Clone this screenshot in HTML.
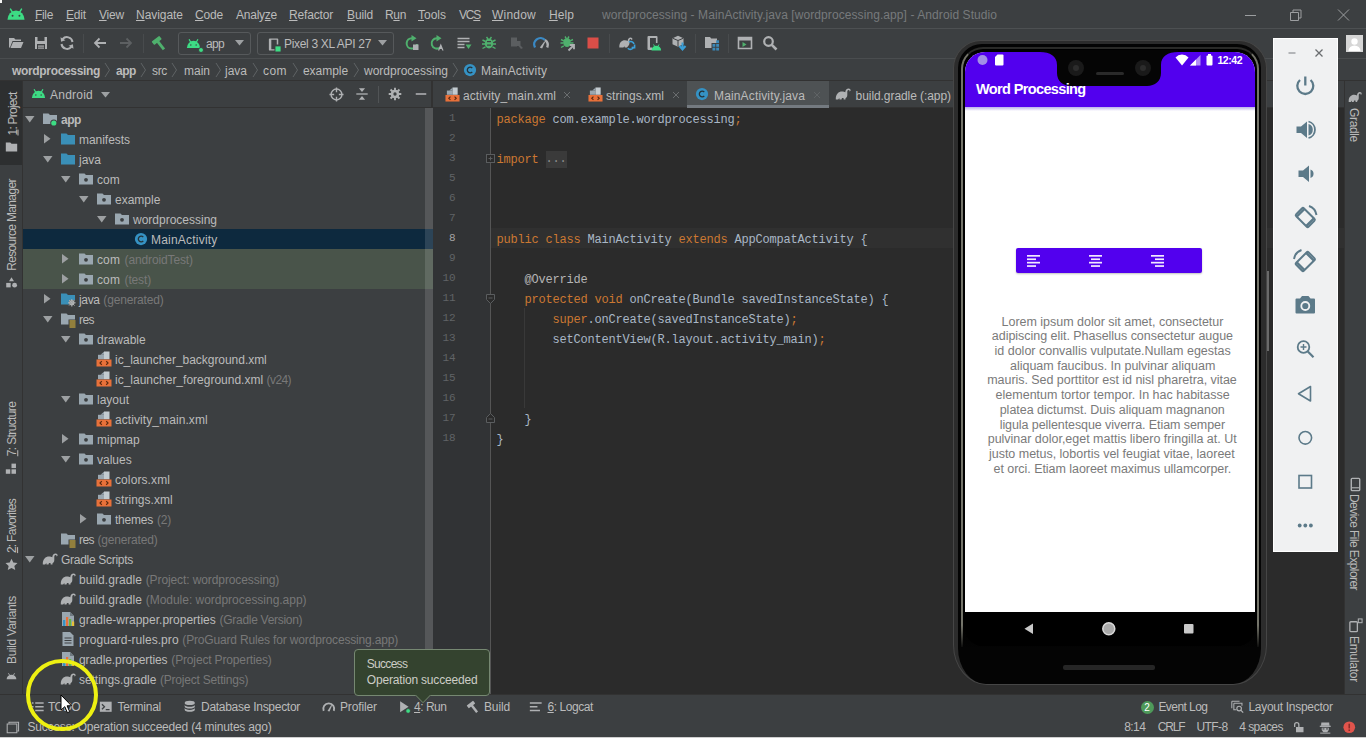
<!DOCTYPE html>
<html>
<head>
<meta charset="utf-8">
<title>Android Studio</title>
<style>
*{box-sizing:border-box;margin:0;padding:0}
html,body{width:1366px;height:738px;overflow:hidden;background:#3c3f41}
body{font-family:"Liberation Sans",sans-serif;font-size:12px;color:#bbbbbb;position:relative}
.abs{position:absolute}
.ic{position:absolute;overflow:visible}
.t{position:absolute;white-space:pre}
u{text-decoration:underline;text-underline-offset:1px}
.ln{position:absolute;width:21.500px;text-align:right;font-family:"Liberation Mono",monospace;font-size:11px;letter-spacing:-0.1px;line-height:20px;height:20px}
.code{position:absolute;white-space:pre;font-family:"Liberation Mono",monospace;font-size:12px;letter-spacing:-0.2px;line-height:20px;height:20px;color:#a9b7c6}
.k{color:#cc7832}
.g{color:#787878}
</style>
</head>
<body>

<div class="abs" style="left:0px;top:0px;width:1366px;height:738px;background:#3c3f41;"></div>
<div class="abs" style="left:0px;top:28px;width:1366px;height:1px;background:#4d5052;"></div>
<div class="abs" style="left:0px;top:0px;width:2px;height:3px;background:#f4f4f4;"></div>
<div class="abs" style="left:0px;top:58px;width:1366px;height:1px;background:#4a4d4f;"></div>
<div class="abs" style="left:0px;top:80px;width:1366px;height:1px;background:#323232;"></div>
<svg class="ic" style="left:5.0px;top:3.0px;" width="22" height="22" viewBox="0 0 16 16"><path d="M1.800 12.200a6.200 6.700 0 0 1 12.400 0z" fill="#3ddc84"/><path d="M4 4.400l1.600 2.600M12 4.400l-1.600 2.600" stroke="#3ddc84" stroke-width="1.100" stroke-linecap="round"/><circle cx="5.500" cy="9.300" r=".7" fill="#3c3f41"/><circle cx="10.500" cy="9.300" r=".7" fill="#3c3f41"/></svg>
<span class="t" style="left:35.0px;top:7.0px;line-height:16px;height:16px;letter-spacing:-0.34px"><u>F</u>ile</span>
<span class="t" style="left:66.0px;top:7.0px;line-height:16px;height:16px;letter-spacing:-0.17px"><u>E</u>dit</span>
<span class="t" style="left:99.0px;top:7.0px;line-height:16px;height:16px;letter-spacing:-0.20px"><u>V</u>iew</span>
<span class="t" style="left:136.0px;top:7.0px;line-height:16px;height:16px;letter-spacing:-0.05px"><u>N</u>avigate</span>
<span class="t" style="left:195.0px;top:7.0px;line-height:16px;height:16px;letter-spacing:-0.17px"><u>C</u>ode</span>
<span class="t" style="left:236.0px;top:7.0px;line-height:16px;height:16px;letter-spacing:-0.24px">Analy<u>z</u>e</span>
<span class="t" style="left:289.0px;top:7.0px;line-height:16px;height:16px;letter-spacing:-0.17px"><u>R</u>efactor</span>
<span class="t" style="left:347.0px;top:7.0px;line-height:16px;height:16px;letter-spacing:-0.14px"><u>B</u>uild</span>
<span class="t" style="left:385.0px;top:7.0px;line-height:16px;height:16px;letter-spacing:-0.34px">R<u>u</u>n</span>
<span class="t" style="left:418.0px;top:7.0px;line-height:16px;height:16px"><u>T</u>ools</span>
<span class="t" style="left:459.0px;top:7.0px;line-height:16px;height:16px;letter-spacing:-1.20px">VC<u>S</u></span>
<span class="t" style="left:492.0px;top:7.0px;line-height:16px;height:16px;letter-spacing:0.22px"><u>W</u>indow</span>
<span class="t" style="left:549.0px;top:7.0px;line-height:16px;height:16px;letter-spacing:0.08px"><u>H</u>elp</span>
<span class="t" style="left:602.0px;top:7.0px;line-height:16px;height:16px;color:#777a7c;letter-spacing:0.08px">wordprocessing - MainActivity.java [wordprocessing.app] - Android Studio</span>
<svg class="ic" style="left:1240px;top:5px" width="120" height="20"><path d="M5 10.500h11" stroke="#9c9ea0" stroke-width="1"/><path d="M50.500 7.500h8v8h-8zM53 7.500V5h8v8h-2.500" fill="none" stroke="#9c9ea0" stroke-width="1"/><path d="M98 4.500l11 11M109 4.500l-11 11" stroke="#9c9ea0" stroke-width="1"/></svg>
<svg class="ic" style="left:7.5px;top:34.7px;" width="16" height="16" viewBox="0 0 16 16"><path d="M1 3h5l1.5 1.5H13V6H4.5L2 12.5H1z" fill="#afb1b3"/><path d="M5 7h10.5l-2.5 6H2.5z" fill="#afb1b3"/></svg>
<svg class="ic" style="left:33.0px;top:34.7px;" width="16" height="16" viewBox="0 0 16 16"><path d="M2 2h12v12H2z" fill="#afb1b3"/><rect x="4.5" y="2" width="7" height="4" fill="#3c3f41"/><rect x="4" y="9" width="8" height="5" fill="#3c3f41"/><rect x="5" y="10.5" width="6" height="1.2" fill="#afb1b3"/><rect x="5" y="12.5" width="6" height="1.2" fill="#afb1b3"/></svg>
<svg class="ic" style="left:59.0px;top:34.7px;" width="16" height="16" viewBox="0 0 16 16"><path d="M13.5 7A5.6 5.6 0 0 0 3.6 4.2" fill="none" stroke="#afb1b3" stroke-width="2"/><path d="M1.5 2.2l.6 4.6 4.3-1.6z" fill="#afb1b3"/><path d="M2.5 9A5.6 5.6 0 0 0 12.4 11.8" fill="none" stroke="#afb1b3" stroke-width="2"/><path d="M14.5 13.8l-.6-4.6-4.3 1.6z" fill="#afb1b3"/></svg>
<svg class="ic" style="left:92.0px;top:34.7px;" width="16" height="16" viewBox="0 0 16 16"><path d="M14 8H3.5M7.5 3.5L3 8l4.5 4.5" fill="none" stroke="#afb1b3" stroke-width="1.8"/></svg>
<svg class="ic" style="left:118.0px;top:34.7px;" width="16" height="16" viewBox="0 0 16 16"><path d="M2 8h10.5M8.5 3.5L13 8l-4.5 4.5" fill="none" stroke="#5d6062" stroke-width="1.8"/></svg>
<svg class="ic" style="left:152.0px;top:34.7px;" width="16" height="16" viewBox="0 0 16 16"><g transform="rotate(-38 8 8)"><rect x="2.200" y="1.800" width="9.600" height="4.200" rx=".6" fill="#4fb06d"/><rect x="5.700" y="5" width="2.900" height="10.500" fill="#4fb06d"/></g></svg>
<div class="abs" style="left:83px;top:34px;width:1px;height:19px;background:#484b4d;"></div>
<div class="abs" style="left:143px;top:34px;width:1px;height:19px;background:#484b4d;"></div>
<div class="abs" style="left:178px;top:32px;width:73px;height:23px;border:1px solid #56595b;border-radius:3px"></div>
<svg class="ic" style="left:185.0px;top:34.5px;" width="17" height="17" viewBox="0 0 16 16"><path d="M1.800 12.200a6.200 6.700 0 0 1 12.400 0z" fill="#3ddc84"/><path d="M4 4.400l1.600 2.600M12 4.400l-1.600 2.600" stroke="#3ddc84" stroke-width="1.100" stroke-linecap="round"/><circle cx="5.500" cy="9.300" r=".7" fill="#3c3f41"/><circle cx="10.500" cy="9.300" r=".7" fill="#3c3f41"/></svg>
<div class="abs" style="left:198px;top:47px;width:6px;height:6px;border-radius:3px;background:#3ddc84;border:1px solid #3c3f41"></div>
<span class="t" style="left:206.0px;top:36.0px;line-height:16px;height:16px;letter-spacing:-0.68px">app</span>
<svg class="ic" style="left:235px;top:40px" width="10" height="6"><path d="M0 0h9L4.500 5.500z" fill="#9da0a2"/></svg>
<div class="abs" style="left:257px;top:32px;width:137px;height:23px;border:1px solid #56595b;border-radius:3px"></div>
<svg class="ic" style="left:267.0px;top:36.5px;" width="15" height="15" viewBox="0 0 16 16"><path d="M3 1.5h8a1 1 0 0 1 1 1V8h-1.6V3H4.6v10H8v1.5H3a1 1 0 0 1-1-1v-11a1 1 0 0 1 1-1z" fill="#afb1b3"/><rect x="9" y="10" width="5.5" height="5.5" fill="#3ddc84"/></svg>
<span class="t" style="left:284.0px;top:36.0px;line-height:16px;height:16px;letter-spacing:-0.31px">Pixel 3 XL API 27</span>
<svg class="ic" style="left:378px;top:40px" width="10" height="6"><path d="M0 0h9L4.500 5.500z" fill="#9da0a2"/></svg>
<svg class="ic" style="left:403.5px;top:34.7px;" width="16" height="16" viewBox="0 0 16 16"><path d="M8 3.2A5.2 5.2 0 1 0 13 9" fill="none" stroke="#4fb06d" stroke-width="2"/><path d="M7.5 0l5 3.2-5 3.2z" fill="#4fb06d"/><rect x="9" y="9.5" width="5.5" height="5.5" fill="#afb1b3"/></svg>
<svg class="ic" style="left:429.0px;top:34.7px;" width="16" height="16" viewBox="0 0 16 16"><path d="M8 3.2A5.2 5.2 0 1 0 11 12.5" fill="none" stroke="#4fb06d" stroke-width="2"/><path d="M7.5 0l5 3.2-5 3.2z" fill="#4fb06d"/><path d="M9 15.5l2.8-7 2.8 7h-1.4l-.5-1.5h-1.9l-.5 1.5z" fill="#afb1b3"/></svg>
<svg class="ic" style="left:456.0px;top:34.7px;" width="16" height="16" viewBox="0 0 16 16"><path d="M1.5 3.5h12M1.5 6.5h12M1.5 9.5h7M1.5 12.5h7" stroke="#afb1b3" stroke-width="1.7"/><path d="M9.5 9.5h6l-3 4.5z" fill="#4fb06d"/></svg>
<svg class="ic" style="left:481.0px;top:34.7px;" width="16" height="16" viewBox="0 0 16 16"><ellipse cx="8" cy="8.5" rx="4.2" ry="5" fill="#4fb06d"/><path d="M1.5 5l3 1.5M14.5 5l-3 1.5M1 9h3M15 9h-3M1.5 13.5l3-1.7M14.5 13.5l-3-1.7M5.5 2l1.5 2M10.5 2L9 4" stroke="#4fb06d" stroke-width="1.4"/><rect x="6" y="6" width="4" height="1.2" fill="#3c3f41"/><rect x="6" y="9.5" width="4" height="1.2" fill="#3c3f41"/></svg>
<svg class="ic" style="left:507.5px;top:34.7px;" width="16" height="16" viewBox="0 0 16 16"><path d="M3 2.5h6v9H3zM9 6h3.5v4.5L15 13l-2 1-2.5-3H9z" fill="#5b5e60"/></svg>
<svg class="ic" style="left:533.0px;top:34.7px;" width="16" height="16" viewBox="0 0 16 16"><path d="M2 12.5A6.3 6.3 0 0 1 12 5" fill="none" stroke="#3a89c4" stroke-width="2.4"/><path d="M12 5a6.3 6.3 0 0 1 2.2 7.5" fill="none" stroke="#afb1b3" stroke-width="2.4"/><path d="M6.8 12.5l4.5-6 .8.5-3 6.5z" fill="#afb1b3"/></svg>
<svg class="ic" style="left:560.0px;top:34.7px;" width="16" height="16" viewBox="0 0 16 16"><ellipse cx="7" cy="7.5" rx="3.8" ry="4.6" fill="#4fb06d"/><path d="M1 4.5l2.8 1.3M13 4.5l-2.8 1.3M.5 8h3M13.5 8h-3M1 12.5l2.8-1.6M5 1.5l1.2 1.8M9 1.5L7.8 3.3" stroke="#4fb06d" stroke-width="1.4"/><path d="M8.5 15.5l4.5-4.5M9.8 10h4.2v4.2" fill="none" stroke="#afb1b3" stroke-width="1.8"/></svg>
<svg class="ic" style="left:585.0px;top:34.7px;" width="16" height="16" viewBox="0 0 16 16"><rect x="2.5" y="2.5" width="11" height="11" fill="#db4e48"/></svg>
<svg class="ic" style="left:619.0px;top:34.7px;" width="16" height="16" viewBox="0 0 16 16"><path d="M.3 11.600C.3 7.500 2.700 5.200 5.800 5.200c1.300 0 2.200.300 2.900.700C8.700 3.900 10 2.500 11.600 2.500c1.200 0 1.800.800 1.800 1.600 0 .600-.400 1.100-1 1.100.100-.700-.300-1.200-.800-1.200-.800 0-1.200.800-1.200 1.900v2.500c0 .800-.300 1.500-.800 2L8 12.500H5.800l-.400-1.300-1 1.300H.3z" fill="#afb1b3"/><path d="M8.800 13.200a3.300 3.300 0 0 0 5.700-1.400M15.600 9.600v3h-3" fill="none" stroke="#3a9fd8" stroke-width="1.600"/><path d="M15 9a3.300 3.300 0 0 0-5.200-1.800" fill="none" stroke="#3a9fd8" stroke-width="1.600"/></svg>
<svg class="ic" style="left:645.5px;top:34.7px;" width="16" height="16" viewBox="0 0 16 16"><path d="M2.500 1h8a1 1 0 0 1 1 1v6h-1.600V3H4v9.500h2V15H2.500a1 1 0 0 1-1-1V2a1 1 0 0 1 1-1z" fill="#afb1b3"/><path d="M5.500 15.500a4.800 4.800 0 0 1 9.600 0z" fill="#3ddc84"/><path d="M7.500 9.500l1 1.600M13 9.500l-1 1.600" stroke="#3ddc84" stroke-width="1"/></svg>
<svg class="ic" style="left:670.5px;top:34.7px;" width="16" height="16" viewBox="0 0 16 16"><path d="M7 .8l5.500 2.400v6L7 11.800 1.500 9.200v-6z" fill="#afb1b3"/><path d="M7 5.500v6M1.800 3.300L7 5.500l5.200-2.200" fill="none" stroke="#3c3f41" stroke-width="1"/><path d="M11.500 7.500v6M8.500 11l3 3.500 3-3.500" fill="none" stroke="#3a9fd8" stroke-width="2"/></svg>
<svg class="ic" style="left:704.0px;top:34.7px;" width="16" height="16" viewBox="0 0 16 16"><path d="M1 2h5l1.200 1.500H13V8H7.500v5H1z" fill="#afb1b3"/><rect x="8.500" y="9" width="2.800" height="2.800" fill="#3a89b9"/><rect x="12.200" y="9" width="2.800" height="2.800" fill="#3a89b9"/><rect x="8.500" y="12.700" width="2.800" height="2.800" fill="#3a89b9"/><rect x="12.200" y="12.700" width="2.800" height="2.800" fill="#3a89b9"/><rect x="12.200" y="5.300" width="2.800" height="2.800" fill="#3a89b9"/></svg>
<svg class="ic" style="left:736.5px;top:34.7px;" width="16" height="16" viewBox="0 0 16 16"><path d="M1.500 2.500h13v11h-13z" fill="none" stroke="#afb1b3" stroke-width="1.600"/><rect x="1.500" y="2.500" width="13" height="3" fill="#afb1b3"/><path d="M5.500 7l4 2.500-4 2.500z" fill="#4fb06d"/></svg>
<svg class="ic" style="left:762.0px;top:34.7px;" width="16" height="16" viewBox="0 0 16 16"><circle cx="6.500" cy="6.500" r="4.300" fill="none" stroke="#afb1b3" stroke-width="2.200"/><path d="M9.800 9.800l4.700 4.700" stroke="#afb1b3" stroke-width="2.600"/></svg>
<div class="abs" style="left:609px;top:34px;width:1px;height:19px;background:#484b4d;"></div>
<div class="abs" style="left:695px;top:34px;width:1px;height:19px;background:#484b4d;"></div>
<div class="abs" style="left:728px;top:34px;width:1px;height:19px;background:#484b4d;"></div>
<svg class="ic" style="left:1346px;top:35px" width="17" height="17"><rect width="17" height="17" fill="#d6d6d6"/><circle cx="8.500" cy="6.500" r="3.200" fill="#fff"/><path d="M2.500 16a6 5.500 0 0 1 12 0z" fill="#fff"/></svg>
<span class="t" style="left:12.0px;top:62.5px;line-height:16px;height:16px;font-weight:bold;letter-spacing:-0.33px">wordprocessing</span>
<span class="t" style="left:116.0px;top:62.5px;line-height:16px;height:16px;font-weight:bold;letter-spacing:-0.45px">app</span>
<span class="t" style="left:152.0px;top:62.5px;line-height:16px;height:16px;letter-spacing:-0.33px">src</span>
<span class="t" style="left:184.0px;top:62.5px;line-height:16px;height:16px">main</span>
<span class="t" style="left:225.0px;top:62.5px;line-height:16px;height:16px">java</span>
<span class="t" style="left:263.0px;top:62.5px;line-height:16px;height:16px;letter-spacing:0.44px">com</span>
<span class="t" style="left:303.0px;top:62.5px;line-height:16px;height:16px;letter-spacing:-0.05px">example</span>
<span class="t" style="left:364.0px;top:62.5px;line-height:16px;height:16px">wordprocessing</span>
<svg class="ic" style="left:104px;top:62px" width="7" height="16"><path d="M1 1l4.500 7L1 15" fill="none" stroke="#5f6365" stroke-width="1"/></svg>
<svg class="ic" style="left:140px;top:62px" width="7" height="16"><path d="M1 1l4.500 7L1 15" fill="none" stroke="#5f6365" stroke-width="1"/></svg>
<svg class="ic" style="left:171px;top:62px" width="7" height="16"><path d="M1 1l4.500 7L1 15" fill="none" stroke="#5f6365" stroke-width="1"/></svg>
<svg class="ic" style="left:215px;top:62px" width="7" height="16"><path d="M1 1l4.500 7L1 15" fill="none" stroke="#5f6365" stroke-width="1"/></svg>
<svg class="ic" style="left:252px;top:62px" width="7" height="16"><path d="M1 1l4.500 7L1 15" fill="none" stroke="#5f6365" stroke-width="1"/></svg>
<svg class="ic" style="left:292px;top:62px" width="7" height="16"><path d="M1 1l4.500 7L1 15" fill="none" stroke="#5f6365" stroke-width="1"/></svg>
<svg class="ic" style="left:353px;top:62px" width="7" height="16"><path d="M1 1l4.500 7L1 15" fill="none" stroke="#5f6365" stroke-width="1"/></svg>
<svg class="ic" style="left:452px;top:62px" width="7" height="16"><path d="M1 1l4.500 7L1 15" fill="none" stroke="#5f6365" stroke-width="1"/></svg>
<svg class="ic" style="left:462.5px;top:62.5px;" width="14" height="14" viewBox="0 0 16 16"><circle cx="8" cy="8" r="7" fill="#3592c4"/><path d="M10.600 10.300A3.300 3.300 0 1 1 10.600 5.700" fill="none" stroke="#263238" stroke-width="1.500"/></svg>
<span class="t" style="left:481.0px;top:62.5px;line-height:16px;height:16px;letter-spacing:0.17px">MainActivity</span>
<div class="abs" style="left:0px;top:81px;width:22px;height:614px;background:#3c3f41;"></div>
<div class="abs" style="left:22px;top:81px;width:1px;height:614px;background:#323232;"></div>
<div class="abs" style="left:0px;top:81px;width:22px;height:84px;background:#2d2f30;"></div>
<span class="t" style="left:-9.5px;top:106.5px;width:43.0px;letter-spacing:-0.77px;transform:rotate(-90deg);transform-origin:50% 50%"><u>1</u>: Project</span>
<svg class="ic" style="left:5.0px;top:140.0px;" width="13" height="13" viewBox="0 0 16 16"><path d="M1 3h5.500L8 4.500h7V14H1z" fill="#afb1b3"/></svg>
<span class="t" style="left:-33.8px;top:217.8px;width:91.5px;letter-spacing:-0.66px;transform:rotate(-90deg);transform-origin:50% 50%">Resource Manager</span>
<svg class="ic" style="left:5.0px;top:275.5px;" width="13" height="13" viewBox="0 0 16 16"><path d="M8 1.500l3 5H5z" fill="#afb1b3"/><rect x="1.500" y="8.500" width="5.500" height="5.500" fill="#afb1b3"/><circle cx="11.800" cy="11.300" r="3" fill="#afb1b3"/></svg>
<span class="t" style="left:-15.2px;top:421.8px;width:54.5px;letter-spacing:-0.63px;transform:rotate(-90deg);transform-origin:50% 50%"><u>7</u>: Structure</span>
<svg class="ic" style="left:5.0px;top:461.5px;" width="13" height="13" viewBox="0 0 16 16"><rect x="1" y="9" width="5.500" height="5.500" fill="#afb1b3"/><rect x="8" y="9" width="5.500" height="5.500" fill="#afb1b3"/><rect x="8" y="2" width="5.500" height="5.500" fill="#afb1b3"/></svg>
<span class="t" style="left:-15.1px;top:518.6px;width:54.2px;letter-spacing:-0.71px;transform:rotate(-90deg);transform-origin:50% 50%"><u>2</u>: Favorites</span>
<svg class="ic" style="left:5.0px;top:558.0px;" width="13" height="13" viewBox="0 0 16 16"><path d="M8 .8l2.200 4.800 5.200.6-3.900 3.500 1.100 5.100L8 12.200l-4.600 2.600 1.100-5.100L.6 6.200l5.200-.6z" fill="#afb1b3"/></svg>
<span class="t" style="left:-21.9px;top:622.6px;width:67.8px;letter-spacing:-0.38px;transform:rotate(-90deg);transform-origin:50% 50%">Build Variants</span>
<svg class="ic" style="left:5.0px;top:668.5px;" width="13" height="13" viewBox="0 0 16 16"><path d="M2 12.500a6 5.500 0 0 1 12 0z" fill="#afb1b3"/><path d="M4.200 5.200l1.400 2.300M11.800 5.200l-1.400 2.300" stroke="#afb1b3" stroke-width="1.100"/></svg>
<div class="abs" style="left:23px;top:107px;width:410px;height:1px;background:#323232;"></div>
<svg class="ic" style="left:29.8px;top:85.0px;" width="17" height="17" viewBox="0 0 16 16"><path d="M1.800 12.200a6.200 6.700 0 0 1 12.400 0z" fill="#3ddc84"/><path d="M4 4.400l1.600 2.600M12 4.400l-1.600 2.600" stroke="#3ddc84" stroke-width="1.100" stroke-linecap="round"/><circle cx="5.500" cy="9.300" r=".7" fill="#3c3f41"/><circle cx="10.500" cy="9.300" r=".7" fill="#3c3f41"/></svg>
<span class="t" style="left:50.0px;top:87.0px;line-height:16px;height:16px;letter-spacing:0.23px">Android</span>
<svg class="ic" style="left:101px;top:92px" width="10" height="6"><path d="M0 0h9L4.500 5.500z" fill="#9da0a2"/></svg>
<svg class="ic" style="left:328.5px;top:86.5px;" width="15" height="15" viewBox="0 0 16 16"><circle cx="8" cy="8" r="5.800" fill="none" stroke="#afb1b3" stroke-width="1.500"/><path d="M8 .5v5M8 10.500v5M.5 8h5M10.500 8h5" stroke="#afb1b3" stroke-width="1.500"/></svg>
<svg class="ic" style="left:355.0px;top:87.0px;" width="14" height="14" viewBox="0 0 16 16"><path d="M1.500 8h13" stroke="#afb1b3" stroke-width="1.500"/><path d="M4.500 1.500h7L8 5.800zM4.500 14.500h7L8 10.200z" fill="#afb1b3"/></svg>
<div class="abs" style="left:378px;top:86px;width:1px;height:17px;background:#515456;"></div>
<svg class="ic" style="left:388.0px;top:87.0px;" width="14" height="14" viewBox="0 0 16 16"><circle cx="8" cy="8" r="3.600" fill="none" stroke="#afb1b3" stroke-width="2.600"/><path d="M8 .8v14.400M.8 8h14.400M2.900 2.900l10.200 10.200M13.100 2.900L2.900 13.100" stroke="#afb1b3" stroke-width="2.200"/><circle cx="8" cy="8" r="1.900" fill="#3c3f41"/></svg>
<svg class="ic" style="left:414.0px;top:87.0px;" width="14" height="14" viewBox="0 0 16 16"><path d="M2 8h12" stroke="#afb1b3" stroke-width="1.800"/></svg>
<svg class="ic" style="left:25px;top:116px" width="10" height="7"><path d="M0 0h9.500L4.750 6.500z" fill="#9da0a2"/></svg>
<svg class="ic" style="left:41.8px;top:110.5px;" width="16" height="16" viewBox="0 0 16 16"><path d="M1 2.500h5.500L8 4h7v9H1z" fill="#9aa7b0"/><circle cx="11.800" cy="12" r="3.600" fill="#3c3f41"/><circle cx="11.800" cy="12" r="2.600" fill="#3ddc84"/></svg>
<span class="t" style="left:61.0px;top:112.0px;line-height:16px;height:16px;font-weight:bold;letter-spacing:-0.45px">app</span>
<svg class="ic" style="left:43.5px;top:134px" width="7" height="10"><path d="M0 0v9.500L6.500 4.750z" fill="#9da0a2"/></svg>
<svg class="ic" style="left:59.8px;top:130.5px;" width="16" height="16" viewBox="0 0 16 16"><path d="M1 2.500h5.500L8 4h7v9.500H1z" fill="#3a8fb7"/></svg>
<span class="t" style="left:79.0px;top:132.0px;line-height:16px;height:16px;letter-spacing:-0.04px">manifests</span>
<svg class="ic" style="left:43px;top:156px" width="10" height="7"><path d="M0 0h9.500L4.750 6.500z" fill="#9da0a2"/></svg>
<svg class="ic" style="left:59.8px;top:150.5px;" width="16" height="16" viewBox="0 0 16 16"><path d="M1 2.500h5.500L8 4h7v9.500H1z" fill="#3a8fb7"/></svg>
<span class="t" style="left:79.0px;top:152.0px;line-height:16px;height:16px">java</span>
<svg class="ic" style="left:61px;top:176px" width="10" height="7"><path d="M0 0h9.500L4.750 6.500z" fill="#9da0a2"/></svg>
<svg class="ic" style="left:77.8px;top:170.5px;" width="16" height="16" viewBox="0 0 16 16"><path d="M1 2.500h5.500L8 4h7v9.500H1z" fill="#9aa7b0"/><circle cx="8" cy="8.800" r="1.900" fill="#3c3f41"/></svg>
<span class="t" style="left:97.0px;top:172.0px;line-height:16px;height:16px">com</span>
<svg class="ic" style="left:79px;top:196px" width="10" height="7"><path d="M0 0h9.500L4.750 6.500z" fill="#9da0a2"/></svg>
<svg class="ic" style="left:95.8px;top:190.5px;" width="16" height="16" viewBox="0 0 16 16"><path d="M1 2.500h5.500L8 4h7v9.500H1z" fill="#9aa7b0"/><circle cx="8" cy="8.800" r="1.900" fill="#3c3f41"/></svg>
<span class="t" style="left:115.0px;top:192.0px;line-height:16px;height:16px">example</span>
<svg class="ic" style="left:97px;top:216px" width="10" height="7"><path d="M0 0h9.500L4.750 6.500z" fill="#9da0a2"/></svg>
<svg class="ic" style="left:113.8px;top:210.5px;" width="16" height="16" viewBox="0 0 16 16"><path d="M1 2.500h5.500L8 4h7v9.500H1z" fill="#9aa7b0"/><circle cx="8" cy="8.800" r="1.900" fill="#3c3f41"/></svg>
<span class="t" style="left:133.0px;top:212.0px;line-height:16px;height:16px">wordprocessing</span>
<div class="abs" style="left:23px;top:229px;width:410px;height:20px;background:#0d293e;"></div>
<svg class="ic" style="left:133.5px;top:231.5px;" width="14" height="14" viewBox="0 0 16 16"><circle cx="8" cy="8" r="7" fill="#3592c4"/><path d="M10.600 10.300A3.300 3.300 0 1 1 10.600 5.700" fill="none" stroke="#263238" stroke-width="1.500"/></svg>
<span class="t" style="left:151.0px;top:232.0px;line-height:16px;height:16px;letter-spacing:0.21px">MainActivity</span>
<div class="abs" style="left:23px;top:249px;width:410px;height:20px;background:#49544a;"></div>
<svg class="ic" style="left:61.5px;top:254px" width="7" height="10"><path d="M0 0v9.500L6.500 4.750z" fill="#9da0a2"/></svg>
<svg class="ic" style="left:77.8px;top:250.5px;" width="16" height="16" viewBox="0 0 16 16"><path d="M1 2.500h5.500L8 4h7v9.500H1z" fill="#9aa7b0"/><circle cx="8" cy="8.800" r="1.900" fill="#3c3f41"/></svg>
<span class="t" style="left:97.0px;top:252.0px;line-height:16px;height:16px;letter-spacing:0.11px">com</span>
<span class="t" style="left:124.6px;top:252.0px;line-height:16px;height:16px;color:#787878;letter-spacing:-0.13px">(androidTest)</span>
<div class="abs" style="left:23px;top:269px;width:410px;height:20px;background:#49544a;"></div>
<svg class="ic" style="left:61.5px;top:274px" width="7" height="10"><path d="M0 0v9.500L6.500 4.750z" fill="#9da0a2"/></svg>
<svg class="ic" style="left:77.8px;top:270.5px;" width="16" height="16" viewBox="0 0 16 16"><path d="M1 2.500h5.500L8 4h7v9.500H1z" fill="#9aa7b0"/><circle cx="8" cy="8.800" r="1.900" fill="#3c3f41"/></svg>
<span class="t" style="left:97.0px;top:272.0px;line-height:16px;height:16px;letter-spacing:0.11px">com</span>
<span class="t" style="left:124.6px;top:272.0px;line-height:16px;height:16px;color:#787878;letter-spacing:-0.16px">(test)</span>
<svg class="ic" style="left:43.5px;top:294px" width="7" height="10"><path d="M0 0v9.500L6.500 4.750z" fill="#9da0a2"/></svg>
<svg class="ic" style="left:59.8px;top:290.5px;" width="16" height="16" viewBox="0 0 16 16"><path d="M1 2.500h5.500L8 4h7v5H9v4.500H1z" fill="#3a8fb7"/><circle cx="11.800" cy="11.800" r="2" fill="none" stroke="#afb1b3" stroke-width="1.400"/><path d="M11.800 8v7.600M8 11.800h7.600M9.100 9.100l5.400 5.400M14.500 9.100l-5.400 5.400" stroke="#afb1b3" stroke-width="1"/></svg>
<span class="t" style="left:79.0px;top:292.0px;line-height:16px;height:16px;letter-spacing:-0.35px">java</span>
<span class="t" style="left:103.3px;top:292.0px;line-height:16px;height:16px;color:#787878;letter-spacing:-0.16px">(generated)</span>
<svg class="ic" style="left:43px;top:316px" width="10" height="7"><path d="M0 0h9.500L4.750 6.500z" fill="#9da0a2"/></svg>
<svg class="ic" style="left:59.8px;top:310.5px;" width="16" height="16" viewBox="0 0 16 16"><path d="M1 2.500h5.500L8 4h7v4.500H8.500v5H1z" fill="#9aa7b0"/><path d="M9.500 10h6M9.500 12h6M9.500 14h6M9.500 16h6" stroke="#e8bf3a" stroke-width="1.100"/></svg>
<span class="t" style="left:79.0px;top:312.0px;line-height:16px;height:16px;letter-spacing:-0.56px">res</span>
<svg class="ic" style="left:61px;top:336px" width="10" height="7"><path d="M0 0h9.500L4.750 6.500z" fill="#9da0a2"/></svg>
<svg class="ic" style="left:77.8px;top:330.5px;" width="16" height="16" viewBox="0 0 16 16"><path d="M1 2.500h5.500L8 4h7v9.500H1z" fill="#9aa7b0"/><circle cx="8" cy="8.800" r="1.900" fill="#3c3f41"/></svg>
<span class="t" style="left:97.0px;top:332.0px;line-height:16px;height:16px">drawable</span>
<svg class="ic" style="left:95.8px;top:350.5px;" width="16" height="16" viewBox="0 0 16 16"><rect x="2" y="3.800" width="6" height="4.500" fill="#9aa7b0"/><rect x="8" y=".5" width="5.500" height="7.800" fill="#c3cbd0"/><path d="M4.500 3.800L8 .8v3z" fill="#9aa7b0"/><rect x="0.500" y="8.500" width="15" height="7" fill="#e8713a"/><path d="M5.800 10.200L4 12l1.800 1.800M10.200 10.200L12 12l-1.800 1.800" fill="none" stroke="#5a2a12" stroke-width="1.200"/></svg>
<span class="t" style="left:115.0px;top:352.0px;line-height:16px;height:16px;letter-spacing:-0.04px">ic_launcher_background.xml</span>
<svg class="ic" style="left:95.8px;top:370.5px;" width="16" height="16" viewBox="0 0 16 16"><rect x="2" y="3.800" width="6" height="4.500" fill="#9aa7b0"/><rect x="8" y=".5" width="5.500" height="7.800" fill="#c3cbd0"/><path d="M4.500 3.800L8 .8v3z" fill="#9aa7b0"/><rect x="0.500" y="8.500" width="15" height="7" fill="#e8713a"/><path d="M5.800 10.200L4 12l1.800 1.800M10.200 10.200L12 12l-1.800 1.800" fill="none" stroke="#5a2a12" stroke-width="1.200"/></svg>
<span class="t" style="left:115.0px;top:372.0px;line-height:16px;height:16px">ic_launcher_foreground.xml</span>
<span class="t" style="left:266.6px;top:372.0px;line-height:16px;height:16px;color:#787878;letter-spacing:-0.59px">(v24)</span>
<svg class="ic" style="left:61px;top:396px" width="10" height="7"><path d="M0 0h9.500L4.750 6.500z" fill="#9da0a2"/></svg>
<svg class="ic" style="left:77.8px;top:390.5px;" width="16" height="16" viewBox="0 0 16 16"><path d="M1 2.500h5.500L8 4h7v9.500H1z" fill="#9aa7b0"/><circle cx="8" cy="8.800" r="1.900" fill="#3c3f41"/></svg>
<span class="t" style="left:97.0px;top:392.0px;line-height:16px;height:16px">layout</span>
<svg class="ic" style="left:95.8px;top:410.5px;" width="16" height="16" viewBox="0 0 16 16"><rect x="2" y="3.800" width="6" height="4.500" fill="#9aa7b0"/><rect x="8" y=".5" width="5.500" height="7.800" fill="#c3cbd0"/><path d="M4.500 3.800L8 .8v3z" fill="#9aa7b0"/><rect x="0.500" y="8.500" width="15" height="7" fill="#e8713a"/><path d="M5.800 10.200L4 12l1.800 1.800M10.200 10.200L12 12l-1.800 1.800" fill="none" stroke="#5a2a12" stroke-width="1.200"/></svg>
<span class="t" style="left:115.0px;top:412.0px;line-height:16px;height:16px;letter-spacing:0.08px">activity_main.xml</span>
<svg class="ic" style="left:61.5px;top:434px" width="7" height="10"><path d="M0 0v9.500L6.500 4.750z" fill="#9da0a2"/></svg>
<svg class="ic" style="left:77.8px;top:430.5px;" width="16" height="16" viewBox="0 0 16 16"><path d="M1 2.500h5.500L8 4h7v9.500H1z" fill="#9aa7b0"/><circle cx="8" cy="8.800" r="1.900" fill="#3c3f41"/></svg>
<span class="t" style="left:97.0px;top:432.0px;line-height:16px;height:16px">mipmap</span>
<svg class="ic" style="left:61px;top:456px" width="10" height="7"><path d="M0 0h9.500L4.750 6.500z" fill="#9da0a2"/></svg>
<svg class="ic" style="left:77.8px;top:450.5px;" width="16" height="16" viewBox="0 0 16 16"><path d="M1 2.500h5.500L8 4h7v9.500H1z" fill="#9aa7b0"/><circle cx="8" cy="8.800" r="1.900" fill="#3c3f41"/></svg>
<span class="t" style="left:97.0px;top:452.0px;line-height:16px;height:16px">values</span>
<svg class="ic" style="left:95.8px;top:470.5px;" width="16" height="16" viewBox="0 0 16 16"><rect x="2" y="3.800" width="6" height="4.500" fill="#9aa7b0"/><rect x="8" y=".5" width="5.500" height="7.800" fill="#c3cbd0"/><path d="M4.500 3.800L8 .8v3z" fill="#9aa7b0"/><rect x="0.500" y="8.500" width="15" height="7" fill="#e8713a"/><path d="M5.800 10.200L4 12l1.800 1.800M10.200 10.200L12 12l-1.800 1.800" fill="none" stroke="#5a2a12" stroke-width="1.200"/></svg>
<span class="t" style="left:115.0px;top:472.0px;line-height:16px;height:16px;letter-spacing:0.10px">colors.xml</span>
<svg class="ic" style="left:95.8px;top:490.5px;" width="16" height="16" viewBox="0 0 16 16"><rect x="2" y="3.800" width="6" height="4.500" fill="#9aa7b0"/><rect x="8" y=".5" width="5.500" height="7.800" fill="#c3cbd0"/><path d="M4.500 3.800L8 .8v3z" fill="#9aa7b0"/><rect x="0.500" y="8.500" width="15" height="7" fill="#e8713a"/><path d="M5.800 10.200L4 12l1.800 1.800M10.200 10.200L12 12l-1.800 1.800" fill="none" stroke="#5a2a12" stroke-width="1.200"/></svg>
<span class="t" style="left:115.0px;top:492.0px;line-height:16px;height:16px;letter-spacing:0.04px">strings.xml</span>
<svg class="ic" style="left:79.5px;top:514px" width="7" height="10"><path d="M0 0v9.500L6.500 4.750z" fill="#9da0a2"/></svg>
<svg class="ic" style="left:95.8px;top:510.5px;" width="16" height="16" viewBox="0 0 16 16"><path d="M1 2.500h5.500L8 4h7v9.500H1z" fill="#9aa7b0"/><circle cx="8" cy="8.800" r="1.900" fill="#3c3f41"/></svg>
<span class="t" style="left:115.0px;top:512.0px;line-height:16px;height:16px;letter-spacing:-0.23px">themes</span>
<span class="t" style="left:157.0px;top:512.0px;line-height:16px;height:16px;color:#787878;letter-spacing:-0.22px">(2)</span>
<svg class="ic" style="left:59.8px;top:530.5px;" width="16" height="16" viewBox="0 0 16 16"><path d="M1 2.500h5.500L8 4h7v4.500H8.500v5H1z" fill="#9aa7b0"/><path d="M9.500 10h6M9.500 12h6M9.500 14h6M9.500 16h6" stroke="#e8bf3a" stroke-width="1.100"/></svg>
<span class="t" style="left:79.0px;top:532.0px;line-height:16px;height:16px;letter-spacing:-0.62px">res</span>
<span class="t" style="left:97.5px;top:532.0px;line-height:16px;height:16px;color:#787878;letter-spacing:-0.19px">(generated)</span>
<svg class="ic" style="left:25px;top:556px" width="10" height="7"><path d="M0 0h9.500L4.750 6.500z" fill="#9da0a2"/></svg>
<svg class="ic" style="left:41.8px;top:550.5px;" width="16" height="16" viewBox="0 0 16 16"><path d="M.8 12.6C.8 8 3.5 5.400 7 5.400c1.500 0 2.500.300 3.300.800C10.300 4 11.800 2.400 13.600 2.400c1.300 0 2 .900 2 1.800 0 .700-.500 1.200-1.100 1.200.100-.800-.300-1.300-.900-1.300-.900 0-1.300.900-1.300 2.100V9c0 1.800-.800 2.800-1.800 3.200v1.400H8.700l-.200-1.500H7l-.500 1.500h-2l-.200-1.500-1.100 1.500H.8z" fill="#afb1b3"/></svg>
<span class="t" style="left:61.0px;top:552.0px;line-height:16px;height:16px;letter-spacing:-0.29px">Gradle Scripts</span>
<svg class="ic" style="left:59.8px;top:570.5px;" width="16" height="16" viewBox="0 0 16 16"><path d="M.8 12.6C.8 8 3.5 5.400 7 5.400c1.500 0 2.500.300 3.300.800C10.300 4 11.800 2.400 13.600 2.400c1.300 0 2 .900 2 1.800 0 .700-.500 1.200-1.100 1.200.100-.800-.300-1.300-.900-1.300-.900 0-1.300.900-1.300 2.100V9c0 1.800-.800 2.800-1.800 3.200v1.400H8.700l-.200-1.500H7l-.500 1.500h-2l-.200-1.500-1.100 1.500H.8z" fill="#afb1b3"/></svg>
<span class="t" style="left:79.0px;top:572.0px;line-height:16px;height:16px;letter-spacing:0.08px">build.gradle</span>
<span class="t" style="left:145.7px;top:572.0px;line-height:16px;height:16px;color:#787878;letter-spacing:-0.10px">(Project: wordprocessing)</span>
<svg class="ic" style="left:59.8px;top:590.5px;" width="16" height="16" viewBox="0 0 16 16"><path d="M.8 12.6C.8 8 3.5 5.400 7 5.400c1.500 0 2.500.300 3.300.800C10.300 4 11.800 2.400 13.600 2.400c1.300 0 2 .900 2 1.800 0 .700-.500 1.200-1.100 1.200.100-.800-.300-1.300-.900-1.300-.900 0-1.300.900-1.300 2.100V9c0 1.800-.800 2.800-1.800 3.200v1.400H8.700l-.200-1.500H7l-.500 1.500h-2l-.200-1.500-1.100 1.500H.8z" fill="#afb1b3"/></svg>
<span class="t" style="left:79.0px;top:592.0px;line-height:16px;height:16px;letter-spacing:0.08px">build.gradle</span>
<span class="t" style="left:145.7px;top:592.0px;line-height:16px;height:16px;color:#787878;letter-spacing:-0.02px">(Module: wordprocessing.app)</span>
<svg class="ic" style="left:59.8px;top:610.5px;" width="16" height="16" viewBox="0 0 16 16"><path d="M2 1h8l4 4v10H2z" fill="#9aa7b0"/><path d="M10 1v4h4z" fill="#6e7980"/><rect x="3" y="9" width="2.200" height="6" fill="#3592c4"/><rect x="6" y="6" width="2.200" height="9" fill="#e8713a"/><rect x="9" y="8" width="2.200" height="7" fill="#62b543"/><rect x="12" y="10.500" width="2.200" height="4.500" fill="#e8bf3a"/></svg>
<span class="t" style="left:79.0px;top:612.0px;line-height:16px;height:16px">gradle-wrapper.properties</span>
<span class="t" style="left:219.6px;top:612.0px;line-height:16px;height:16px;color:#787878;letter-spacing:-0.29px">(Gradle Version)</span>
<svg class="ic" style="left:59.8px;top:630.5px;" width="16" height="16" viewBox="0 0 16 16"><path d="M2.500 1h7.500l3.500 3.500V15h-11z" fill="#9aa7b0"/><path d="M4.500 7h7M4.500 9.500h7M4.500 12h7" stroke="#3c3f41" stroke-width="1.100"/></svg>
<span class="t" style="left:79.0px;top:632.0px;line-height:16px;height:16px;letter-spacing:0.05px">proguard-rules.pro</span>
<span class="t" style="left:182.3px;top:632.0px;line-height:16px;height:16px;color:#787878;letter-spacing:-0.16px">(ProGuard Rules for wordprocessing.app)</span>
<svg class="ic" style="left:59.8px;top:650.5px;" width="16" height="16" viewBox="0 0 16 16"><path d="M2 1h8l4 4v10H2z" fill="#9aa7b0"/><path d="M10 1v4h4z" fill="#6e7980"/><rect x="3" y="9" width="2.200" height="6" fill="#3592c4"/><rect x="6" y="6" width="2.200" height="9" fill="#e8713a"/><rect x="9" y="8" width="2.200" height="7" fill="#62b543"/><rect x="12" y="10.500" width="2.200" height="4.500" fill="#e8bf3a"/></svg>
<span class="t" style="left:79.0px;top:652.0px;line-height:16px;height:16px;letter-spacing:-0.09px">gradle.properties</span>
<span class="t" style="left:171.3px;top:652.0px;line-height:16px;height:16px;color:#787878;letter-spacing:-0.15px">(Project Properties)</span>
<svg class="ic" style="left:59.8px;top:670.5px;" width="16" height="16" viewBox="0 0 16 16"><path d="M.8 12.6C.8 8 3.5 5.400 7 5.400c1.500 0 2.500.300 3.300.800C10.300 4 11.800 2.400 13.600 2.400c1.300 0 2 .900 2 1.800 0 .700-.500 1.200-1.100 1.200.100-.800-.300-1.300-.900-1.300-.900 0-1.300.900-1.300 2.100V9c0 1.800-.800 2.800-1.800 3.200v1.400H8.700l-.200-1.500H7l-.500 1.500h-2l-.200-1.500-1.100 1.500H.8z" fill="#afb1b3"/></svg>
<span class="t" style="left:79.0px;top:672.0px;line-height:16px;height:16px;letter-spacing:-0.05px">settings.gradle</span>
<span class="t" style="left:160.0px;top:672.0px;line-height:16px;height:16px;color:#787878;letter-spacing:-0.21px">(Project Settings)</span>
<svg class="ic" style="left:61.5px;top:691.5px;" width="15" height="15" viewBox="0 0 16 16"><path d="M.8 12.6C.8 8 3.5 5.400 7 5.400c1.500 0 2.500.300 3.300.800C10.300 4 11.800 2.400 13.600 2.400c1.300 0 2 .900 2 1.800 0 .700-.500 1.200-1.100 1.200.100-.800-.300-1.300-.900-1.300-.900 0-1.300.900-1.300 2.100V9c0 1.800-.800 2.800-1.800 3.200v1.400H8.700l-.200-1.500H7l-.500 1.500h-2l-.200-1.500-1.100 1.500H.8z" fill="#afb1b3"/></svg>
<div class="abs" style="left:23px;top:695px;width:410px;height:10px;background:#3c3f41;"></div>
<div class="abs" style="left:431px;top:81px;width:2px;height:27px;background:#323232;"></div>
<div class="abs" style="left:425px;top:108px;width:8px;height:587px;background:rgba(255,255,255,0.13);"></div>
<div class="abs" style="left:433px;top:108px;width:1px;height:587px;background:#2b2b2b;"></div>
<div class="abs" style="left:433px;top:81px;width:911px;height:614px;background:#2b2b2b;"></div>
<div class="abs" style="left:433px;top:81px;width:911px;height:27px;background:#3c3f41;"></div>
<div class="abs" style="left:433px;top:107px;width:911px;height:1px;background:#323232;"></div>
<svg class="ic" style="left:444.5px;top:86.5px;" width="15" height="15" viewBox="0 0 16 16"><rect x="2" y="3.800" width="6" height="4.500" fill="#9aa7b0"/><rect x="8" y=".5" width="5.500" height="7.800" fill="#c3cbd0"/><path d="M4.500 3.800L8 .8v3z" fill="#9aa7b0"/><rect x="0.500" y="8.500" width="15" height="7" fill="#e8713a"/><path d="M5.800 10.200L4 12l1.800 1.800M10.200 10.200L12 12l-1.800 1.800" fill="none" stroke="#5a2a12" stroke-width="1.200"/></svg>
<span class="t" style="left:463.0px;top:87.5px;line-height:16px;height:16px;letter-spacing:0.10px">activity_main.xml</span>
<svg class="ic" style="left:563px;top:90.5px" width="8" height="8"><path d="M1 1l6 6M7 1L1 7" stroke="#6a6d6f" stroke-width="1"/></svg>
<svg class="ic" style="left:587.5px;top:86.5px;" width="15" height="15" viewBox="0 0 16 16"><rect x="2" y="3.800" width="6" height="4.500" fill="#9aa7b0"/><rect x="8" y=".5" width="5.500" height="7.800" fill="#c3cbd0"/><path d="M4.500 3.800L8 .8v3z" fill="#9aa7b0"/><rect x="0.500" y="8.500" width="15" height="7" fill="#e8713a"/><path d="M5.800 10.200L4 12l1.800 1.800M10.200 10.200L12 12l-1.800 1.800" fill="none" stroke="#5a2a12" stroke-width="1.200"/></svg>
<span class="t" style="left:606.0px;top:87.5px;line-height:16px;height:16px;letter-spacing:0.06px">strings.xml</span>
<svg class="ic" style="left:672px;top:90.5px" width="8" height="8"><path d="M1 1l6 6M7 1L1 7" stroke="#6a6d6f" stroke-width="1"/></svg>
<div class="abs" style="left:687px;top:81px;width:142px;height:27px;background:#4e5254;"></div>
<div class="abs" style="left:687px;top:105px;width:142px;height:3px;background:#747a80;"></div>
<svg class="ic" style="left:695.0px;top:87.0px;" width="14" height="14" viewBox="0 0 16 16"><circle cx="8" cy="8" r="7" fill="#3592c4"/><path d="M10.600 10.300A3.300 3.300 0 1 1 10.600 5.700" fill="none" stroke="#263238" stroke-width="1.500"/></svg>
<span class="t" style="left:714.0px;top:87.5px;line-height:16px;height:16px;letter-spacing:0.15px">MainActivity.java</span>
<svg class="ic" style="left:813px;top:90.5px" width="8" height="8"><path d="M1 1l6 6M7 1L1 7" stroke="#5f6365" stroke-width="1"/></svg>
<svg class="ic" style="left:835.0px;top:86.0px;" width="16" height="16" viewBox="0 0 16 16"><path d="M.8 12.6C.8 8 3.5 5.400 7 5.400c1.500 0 2.500.300 3.300.800C10.300 4 11.800 2.400 13.600 2.400c1.300 0 2 .900 2 1.800 0 .700-.500 1.200-1.100 1.200.100-.800-.300-1.300-.900-1.300-.900 0-1.300.900-1.300 2.100V9c0 1.800-.800 2.800-1.800 3.200v1.400H8.700l-.200-1.500H7l-.500 1.500h-2l-.200-1.500-1.100 1.500H.8z" fill="#afb1b3"/></svg>
<span class="t" style="left:855.6px;top:87.5px;line-height:16px;height:16px;letter-spacing:-0.07px">build.gradle (:app)</span>
<div class="abs" style="left:433px;top:108px;width:58px;height:587px;background:#313335;"></div>
<div class="abs" style="left:490px;top:108px;width:1px;height:587px;background:#555555;"></div>
<div class="abs" style="left:491px;top:228px;width:853px;height:20px;background:#303030;"></div>
<div class="ln" style="left:434px;top:107.5px;color:#606366">1</div>
<div class="code" style="left:496.500px;top:109.5px"><span class="k">package </span>com.example.wordprocessing<span class="k">;</span></div>
<div class="ln" style="left:434px;top:127.5px;color:#606366">2</div>
<div class="ln" style="left:434px;top:147.5px;color:#606366">3</div>
<div class="code" style="left:496.500px;top:149.5px"><span class="k">import </span><span style="background:#3a3a3a;color:#8c8c8c;display:inline-block;height:17px;line-height:17px;vertical-align:top;margin-top:1px">...</span></div>
<div class="ln" style="left:434px;top:167.5px;color:#606366">5</div>
<div class="ln" style="left:434px;top:187.5px;color:#606366">6</div>
<div class="ln" style="left:434px;top:207.5px;color:#606366">7</div>
<div class="ln" style="left:434px;top:227.5px;color:#a4a3a3">8</div>
<div class="code" style="left:496.500px;top:229.5px"><span class="k">public class </span>MainActivity <span class="k">extends </span>AppCompatActivity {</div>
<div class="ln" style="left:434px;top:247.5px;color:#606366">9</div>
<div class="ln" style="left:434px;top:267.5px;color:#606366">10</div>
<div class="code" style="left:496.500px;top:269.5px">    <span style="color:#b5b5b5">@Override</span></div>
<div class="ln" style="left:434px;top:287.5px;color:#606366">11</div>
<div class="code" style="left:496.500px;top:289.5px">    <span class="k">protected void </span>onCreate(Bundle savedInstanceState) {</div>
<div class="ln" style="left:434px;top:307.5px;color:#606366">12</div>
<div class="code" style="left:496.500px;top:309.5px">        <span class="k">super</span>.onCreate(savedInstanceState)<span class="k">;</span></div>
<div class="ln" style="left:434px;top:327.5px;color:#606366">13</div>
<div class="code" style="left:496.500px;top:329.5px">        setContentView(R.layout.activity_main)<span class="k">;</span></div>
<div class="ln" style="left:434px;top:347.5px;color:#606366">14</div>
<div class="ln" style="left:434px;top:367.5px;color:#606366">15</div>
<div class="ln" style="left:434px;top:387.5px;color:#606366">16</div>
<div class="ln" style="left:434px;top:407.5px;color:#606366">17</div>
<div class="code" style="left:496.500px;top:409.5px">    }</div>
<div class="ln" style="left:434px;top:427.5px;color:#606366">18</div>
<div class="code" style="left:496.500px;top:429.5px">}</div>
<svg class="ic" style="left:486.0px;top:153.5px" width="9" height="9"><rect x=".5" y=".5" width="8" height="8" fill="#2b2b2b" stroke="#5a5d5f"/><path d="M2.500 4.500h4M4.500 2.500v4" stroke="#5a5d5f"/></svg>
<svg class="ic" style="left:486.0px;top:293.5px" width="9" height="10"><path d="M.5 .5h8v5l-4 4-4-4z" fill="#2b2b2b" stroke="#5a5d5f"/><path d="M2.500 4h4" stroke="#5a5d5f"/></svg>
<svg class="ic" style="left:486.0px;top:412.5px" width="9" height="10"><path d="M.5 9.500h8v-5l-4-4-4 4z" fill="#2b2b2b" stroke="#5a5d5f"/><path d="M2.500 6h4" stroke="#5a5d5f"/></svg>
<div class="abs" style="left:524px;top:308px;width:1px;height:100px;background:#393939;"></div>
<div class="abs" style="left:1267px;top:271px;width:2px;height:80px;background:#6a6a6a;"></div>
<div class="abs" style="left:1344px;top:81px;width:22px;height:614px;background:#3c3f41;"></div>
<div class="abs" style="left:1344px;top:81px;width:1px;height:614px;background:#323232;"></div>
<svg class="ic" style="left:1348.0px;top:90.0px;" width="14" height="14" viewBox="0 0 16 16"><path d="M.8 12.6C.8 8 3.5 5.400 7 5.400c1.500 0 2.500.300 3.300.800C10.300 4 11.800 2.400 13.600 2.400c1.300 0 2 .900 2 1.800 0 .700-.500 1.200-1.100 1.200.100-.800-.300-1.300-.900-1.300-.900 0-1.300.900-1.300 2.100V9c0 1.800-.800 2.800-1.800 3.200v1.400H8.700l-.200-1.500H7l-.500 1.500h-2l-.200-1.500-1.100 1.500H.8z" fill="#afb1b3"/></svg>
<span class="t" style="left:1337.0px;top:117.5px;width:33.9px;letter-spacing:-0.36px;transform:rotate(90deg);transform-origin:50% 50%">Gradle</span>
<svg class="ic" style="left:1347.5px;top:477.0px;" width="15" height="15" viewBox="0 0 16 16"><rect x="3.500" y="1.500" width="9" height="13" rx="1" fill="none" stroke="#afb1b3" stroke-width="1.500"/><path d="M3.500 11.500h9" stroke="#afb1b3" stroke-width="1.200"/></svg>
<span class="t" style="left:1306.0px;top:535.0px;width:96.0px;letter-spacing:-0.57px;transform:rotate(90deg);transform-origin:50% 50%">Device File Explorer</span>
<svg class="ic" style="left:1348.0px;top:618.0px;" width="15" height="15" viewBox="0 0 16 16"><rect x="2" y="4" width="8" height="10.500" rx="1" fill="none" stroke="#afb1b3" stroke-width="1.400"/><rect x="11" y="1" width="4" height="4" fill="none" stroke="#afb1b3" stroke-width="1.100"/></svg>
<span class="t" style="left:1331.0px;top:651.5px;width:46.1px;letter-spacing:-0.24px;transform:rotate(90deg);transform-origin:50% 50%">Emulator</span>
<div class="abs" style="left:953px;top:40px;width:313.500px;height:645px;border-radius:28px 28px 34px 34px/28px 28px 40px 40px;background:#2c2c2c;border:1px solid #464646"></div>
<div class="abs" style="left:958px;top:44px;width:303px;height:639.500px;border-radius:24px 24px 28px 28px/24px 24px 36px 36px;background:#040404"></div>
<div class="abs" style="left:961px;top:47px;width:298.300px;height:600px;border-radius:22px 22px 0 0;background:#000;border:2px solid #74746a;border-top-color:#2a2a28;border-bottom:0"></div>
<div class="abs" style="left:961px;top:625px;width:298.300px;height:30px;background:linear-gradient(rgba(4,4,4,0),#040404 80%)"></div>
<div class="abs" style="left:965px;top:52px;width:289.500px;height:594px;border-radius:20px 20px 18px 18px;background:#000"></div>
<div class="abs" style="left:965px;top:52px;width:289.500px;height:560px;border-radius:20px 20px 0 0;background:#fff;overflow:hidden"><div class="abs" style="left:0;top:0;width:290px;height:55px;background:#5200ee"></div><div class="abs" style="left:0;top:55px;width:290px;height:4px;background:linear-gradient(#b9b0ea,#fff)"></div></div>
<svg class="ic" style="left:1040px;top:50px" width="138" height="38"><path d="M0 0h138v2c-10 0-17 4-17 13v8c0 8-6 13-14 13H31c-8 0-14-5-14-13v-8C17 6 10 2 0 2z" fill="#050505"/><circle cx="36" cy="18" r="8" fill="#1a1a1a"/><circle cx="103" cy="18" r="8" fill="#1a1a1a"/><circle cx="36" cy="18" r="3" fill="#2c2c2c"/><circle cx="103" cy="18" r="3" fill="#2c2c2c"/><rect x="56" y="22" width="28" height="3" rx="1.500" fill="#2a2a2a"/></svg>
<svg class="ic" style="left:975px;top:52px" width="32" height="16"><circle cx="7.500" cy="8" r="5" fill="#a28fe6"/><path d="M22.500 2.500h5a1 1 0 0 1 1 1v9a1 1 0 0 1-1 1h-6.500a1 1 0 0 1-1-1V5z" fill="#fff"/></svg>
<svg class="ic" style="left:1174px;top:52px" width="42" height="16"><path d="M1.500 5.500a8.500 8.500 0 0 1 13 0L8 13.500z" fill="#fff"/><path d="M26.500 3v10.500H16z" fill="#fff" opacity=".55"/><path d="M22 7.500v6h-6z" fill="#fff"/><rect x="32.500" y="3.500" width="6" height="10" rx="1" fill="#fff"/><rect x="34" y="2" width="3" height="2" fill="#fff"/></svg>
<span class="t" style="left:1217.5px;top:53.2px;line-height:14.5px;height:14.5px;font-size:10.5px;font-weight:bold;color:#fff;letter-spacing:-0.47px">12:42</span>
<span class="t" style="left:976.0px;top:80.0px;line-height:18.5px;height:18.5px;font-size:14.5px;font-weight:bold;color:#fff;letter-spacing:-0.63px">Word Processing</span>
<div class="abs" style="left:1016px;top:248px;width:186px;height:25px;border-radius:2px;background:#5200ee;box-shadow:0 1px 2px rgba(0,0,0,.25)"></div>
<svg class="ic" style="left:1026.5px;top:254px" width="13" height="14"><rect x="0" y="1.0" width="13" height="1.700" fill="#f3e9ff"/><rect x="0" y="4.4" width="9" height="1.700" fill="#f3e9ff"/><rect x="0" y="7.8" width="13" height="1.700" fill="#f3e9ff"/><rect x="0" y="11.2" width="9" height="1.700" fill="#f3e9ff"/></svg>
<svg class="ic" style="left:1088.5px;top:254px" width="13" height="14"><rect x="0.0" y="1.0" width="13" height="1.700" fill="#f3e9ff"/><rect x="2.0" y="4.4" width="9" height="1.700" fill="#f3e9ff"/><rect x="0.0" y="7.8" width="13" height="1.700" fill="#f3e9ff"/><rect x="2.0" y="11.2" width="9" height="1.700" fill="#f3e9ff"/></svg>
<svg class="ic" style="left:1150.5px;top:254px" width="13" height="14"><rect x="0" y="1.0" width="13" height="1.700" fill="#f3e9ff"/><rect x="4" y="4.4" width="9" height="1.700" fill="#f3e9ff"/><rect x="0" y="7.8" width="13" height="1.700" fill="#f3e9ff"/><rect x="4" y="11.2" width="9" height="1.700" fill="#f3e9ff"/></svg>
<span class="t" style="left:1001.5px;top:313.6px;line-height:16.5px;height:16.5px;font-size:12.5px;color:#7a7a7a;letter-spacing:-0.01px">Lorem ipsum dolor sit amet, consectetur</span>
<span class="t" style="left:991.8px;top:328.3px;line-height:16.5px;height:16.5px;font-size:12.5px;color:#7a7a7a;letter-spacing:-0.03px">adipiscing elit. Phasellus consectetur augue</span>
<span class="t" style="left:994.5px;top:343.0px;line-height:16.5px;height:16.5px;font-size:12.5px;color:#7a7a7a">id dolor convallis vulputate.Nullam egestas</span>
<span class="t" style="left:1010.0px;top:357.8px;line-height:16.5px;height:16.5px;font-size:12.5px;color:#7a7a7a;letter-spacing:-0.01px">aliquam faucibus. In pulvinar aliquam</span>
<span class="t" style="left:987.2px;top:372.4px;line-height:16.5px;height:16.5px;font-size:12.5px;color:#7a7a7a;letter-spacing:-0.04px">mauris. Sed porttitor est id nisl pharetra, vitae</span>
<span class="t" style="left:995.6px;top:387.1px;line-height:16.5px;height:16.5px;font-size:12.5px;color:#7a7a7a">elementum tortor tempor. In hac habitasse</span>
<span class="t" style="left:999.7px;top:401.8px;line-height:16.5px;height:16.5px;font-size:12.5px;color:#7a7a7a;letter-spacing:-0.02px">platea dictumst. Duis aliquam magnanon</span>
<span class="t" style="left:999.7px;top:416.5px;line-height:16.5px;height:16.5px;font-size:12.5px;color:#7a7a7a;letter-spacing:-0.08px">ligula pellentesque viverra. Etiam semper</span>
<span class="t" style="left:987.7px;top:431.2px;line-height:16.5px;height:16.5px;font-size:12.5px;color:#7a7a7a;letter-spacing:-0.01px">pulvinar dolor,eget mattis libero fringilla at. Ut</span>
<span class="t" style="left:989.0px;top:445.9px;line-height:16.5px;height:16.5px;font-size:12.5px;color:#7a7a7a;letter-spacing:-0.02px">justo metus, lobortis vel feugiat vitae, laoreet</span>
<span class="t" style="left:993.6px;top:460.6px;line-height:16.5px;height:16.5px;font-size:12.5px;color:#7a7a7a;letter-spacing:-0.05px">et orci. Etiam laoreet maximus ullamcorper.</span>
<svg class="ic" style="left:1015px;top:618px" width="190" height="22"><path d="M18 5.500v10.500L9.500 10.750z" fill="#c9c9c9"/><circle cx="93.800" cy="10.700" r="6" fill="#a9a9a9" stroke="#d9d9d9" stroke-width="1.500"/><rect x="169" y="6" width="9.500" height="9.500" rx="1" fill="#c9c9c9"/></svg>
<div class="abs" style="left:1063px;top:665px;width:92px;height:5px;background:#262626;border-radius:2px"></div>
<div class="abs" style="left:1273px;top:38px;width:65px;height:514px;background:#f0f1f2;border:1px solid #fff"></div>
<svg class="ic" style="left:1273px;top:38px" width="65" height="514" fill="none" stroke="#5c7a89"><path d="M15.500 15h7" stroke="#8a8d90" stroke-width="1.200"/><path d="M42.500 11.500l7 7M49.500 11.500l-7 7" stroke="#6a6d70" stroke-width="1.300"/><path d="M27 42a8 8 0 1 0 10.600 0" stroke-width="2.300"/><path d="M32.300 38.500v9" stroke-width="2.300"/><path d="M23.500 88.500h4.500l6-5v16.500l-6-5h-4.500z" fill="#5c7a89" stroke="none"/><path d="M35.500 86a6 6 0 0 1 0 11.500" fill="#5c7a89" stroke="none"/><path d="M35.500 83.500a8.500 8.500 0 0 1 0 16.500" stroke-width="1.800"/><path d="M25.500 132.500h4.500l6-5v16.500l-6-5h-4.500z" fill="#5c7a89" stroke="none"/><path d="M37.500 131.500a4.500 4.500 0 0 1 0 8.500z" fill="#5c7a89" stroke="none"/><g transform="translate(32.300,179.500) rotate(-45)"><rect x="-5.500" y="-8.800" width="11" height="17.600" rx="1.500" stroke-width="2"/><path d="M-5.500 -6.700h11M-5.500 6.700h11" stroke-width="2.400"/></g><path d="M36 168a11.500 11.500 0 0 1 7.500 9" stroke-width="1.900"/><g transform="translate(32.300,223.500) rotate(45)"><rect x="-5.500" y="-8.800" width="11" height="17.600" rx="1.500" stroke-width="2"/><path d="M-5.500 -6.700h11M-5.500 6.700h11" stroke-width="2.400"/></g><path d="M28.500 212a11.500 11.500 0 0 0 -7.500 9" stroke-width="1.900"/><path d="M23.500 260.500h3.500l2-2.500h6.500l2 2.500h3.500a1 1 0 0 1 1 1v13a1 1 0 0 1-1 1h-17.500a1 1 0 0 1-1-1v-13a1 1 0 0 1 1-1z" fill="#5c7a89" stroke="none"/><circle cx="32.300" cy="268" r="4" stroke="#f0f1f2" stroke-width="1.800"/><circle cx="30.500" cy="309" r="5.800" stroke-width="1.800"/><path d="M34.800 313.500l5.700 5.700" stroke-width="2.200"/><path d="M27.500 309h6M30.500 306v6" stroke-width="1.400"/><path d="M37.500 348.500v14.500l-12-7.250z" stroke-width="1.600" stroke-linejoin="round"/><circle cx="32.300" cy="399.800" r="6.300" stroke-width="1.600"/><rect x="26" y="437.500" width="12.500" height="12.500" stroke-width="1.600"/><circle cx="26.700" cy="487.500" r="1.900" fill="#5c7a89" stroke="none"/><circle cx="32.300" cy="487.500" r="1.900" fill="#5c7a89" stroke="none"/><circle cx="37.900" cy="487.500" r="1.900" fill="#5c7a89" stroke="none"/></svg>
<div class="abs" style="left:0px;top:695px;width:1366px;height:43px;background:#3c3f41;"></div>
<div class="abs" style="left:0px;top:694px;width:1366px;height:1px;background:#323232;"></div>
<div class="abs" style="left:0px;top:737px;width:1366px;height:1px;background:#cfcfcf;"></div>
<svg class="ic" style="left:31.2px;top:699.8px;" width="13.5" height="13.5" viewBox="0 0 16 16"><path d="M1 3.500h2M1 8h2M1 12.500h2M5 3.500h10M5 8h10M5 12.500h10" stroke="#afb1b3" stroke-width="1.800"/></svg>
<span class="t" style="left:48.0px;top:699.0px;line-height:16px;height:16px;letter-spacing:-0.61px">TODO</span>
<svg class="ic" style="left:99.2px;top:699.8px;" width="13.5" height="13.5" viewBox="0 0 16 16"><rect x="1" y="2" width="14" height="12" fill="#afb1b3"/><path d="M3.500 5l3 3-3 3M8 11.500h4.500" fill="none" stroke="#3c3f41" stroke-width="1.500"/></svg>
<span class="t" style="left:117.5px;top:699.0px;line-height:16px;height:16px;letter-spacing:-0.23px">Terminal</span>
<svg class="ic" style="left:183.2px;top:699.8px;" width="13.5" height="13.5" viewBox="0 0 16 16"><ellipse cx="8" cy="3.500" rx="6" ry="2.500" fill="#afb1b3"/><path d="M2 5.500c0 3.300 12 3.300 12 0v2.200c0 3.300-12 3.300-12 0zM2 9.300c0 3.300 12 3.300 12 0v2.200c0 3.300-12 3.300-12 0z" fill="#afb1b3"/></svg>
<span class="t" style="left:201.0px;top:699.0px;line-height:16px;height:16px;letter-spacing:-0.28px">Database Inspector</span>
<svg class="ic" style="left:322.2px;top:699.8px;" width="13.5" height="13.5" viewBox="0 0 16 16"><path d="M2 13A6.500 6.500 0 1 1 14 13" fill="none" stroke="#afb1b3" stroke-width="2.200"/><path d="M6.500 13l4.500-7 .9.600-3 7z" fill="#afb1b3"/></svg>
<span class="t" style="left:340.0px;top:699.0px;line-height:16px;height:16px;letter-spacing:-0.13px">Profiler</span>
<svg class="ic" style="left:397.8px;top:699.8px;" width="13.5" height="13.5" viewBox="0 0 16 16"><path d="M2.500 1.500l10 6.500-10 6.500z" fill="#afb1b3"/><circle cx="12" cy="13" r="2.800" fill="#3ddc84" stroke="#3c3f41" stroke-width="1"/></svg>
<span class="t" style="left:414.0px;top:699.0px;line-height:16px;height:16px;letter-spacing:-0.48px"><u>4</u>: Run</span>
<svg class="ic" style="left:466.8px;top:699.8px;" width="13.5" height="13.5" viewBox="0 0 16 16"><g transform="rotate(-38 8 8)"><rect x="2.200" y="1.800" width="9.600" height="4.200" rx=".6" fill="#afb1b3"/><rect x="5.700" y="5" width="2.900" height="10.500" fill="#afb1b3"/></g></svg>
<span class="t" style="left:484.0px;top:699.0px;line-height:16px;height:16px;letter-spacing:-0.14px">Build</span>
<svg class="ic" style="left:529.2px;top:699.8px;" width="13.5" height="13.5" viewBox="0 0 16 16"><path d="M1 3.500h14M1 8h9M1 12.500h12" stroke="#afb1b3" stroke-width="1.900"/></svg>
<span class="t" style="left:547.5px;top:699.0px;line-height:16px;height:16px;letter-spacing:-0.43px"><u>6</u>: Logcat</span>
<div class="abs" style="left:1140.500px;top:700.500px;width:13px;height:13px;border-radius:7px;background:#4e9a5a;color:#fff;font-size:10px;line-height:13px;text-align:center">2</div>
<span class="t" style="left:1158.4px;top:699.0px;line-height:16px;height:16px;letter-spacing:-0.55px">Event Log</span>
<svg class="ic" style="left:1230.8px;top:700.0px;" width="13" height="13" viewBox="0 0 16 16"><path d="M1 1.500h9.500M1 1.500v8.500M3.500 4h10v3M3.500 4v8h3" fill="none" stroke="#afb1b3" stroke-width="1.300"/><circle cx="10" cy="10.500" r="2.800" fill="none" stroke="#afb1b3" stroke-width="1.400"/><path d="M12 12.500l3 3" stroke="#afb1b3" stroke-width="1.600"/></svg>
<span class="t" style="left:1248.4px;top:699.0px;line-height:16px;height:16px;letter-spacing:-0.28px">Layout Inspector</span>
<svg class="ic" style="left:5.0px;top:720.0px;" width="14" height="14" viewBox="0 0 16 16"><path d="M2.500 4.500h11v10h-11z" fill="none" stroke="#afb1b3" stroke-width="1.200"/><path d="M4.500 4V2.500h11v10H14" fill="none" stroke="#afb1b3" stroke-width="1.200"/></svg>
<span class="t" style="left:27.5px;top:719.0px;line-height:16px;height:16px;letter-spacing:-0.20px">Success: Operation succeeded (4 minutes ago)</span>
<span class="t" style="left:1124.3px;top:719.0px;line-height:16px;height:16px;letter-spacing:-0.61px">8:14</span>
<span class="t" style="left:1157.8px;top:719.0px;line-height:16px;height:16px;letter-spacing:-1.20px">CRLF</span>
<span class="t" style="left:1196.4px;top:719.0px;line-height:16px;height:16px;letter-spacing:-0.56px">UTF-8</span>
<span class="t" style="left:1239.2px;top:719.0px;line-height:16px;height:16px;letter-spacing:-0.53px">4 spaces</span>
<svg class="ic" style="left:1293.3px;top:721.0px;" width="12" height="12" viewBox="0 0 16 16"><rect x="4" y="8" width="10" height="7" fill="#afb1b3"/><path d="M2.200 8V5a2.800 2.800 0 0 1 5.600 0v3" fill="none" stroke="#afb1b3" stroke-width="1.700"/></svg>
<svg class="ic" style="left:1318.8px;top:720.8px;" width="12.5" height="12.5" viewBox="0 0 16 16"><path d="M3 2h10l.5 4h-11z" fill="#afb1b3"/><rect x="1" y="6" width="14" height="1.600" fill="#afb1b3"/><path d="M3.500 8.500h9v3l-2 3h-5l-2-3z" fill="#afb1b3"/><rect x="4.500" y="9.500" width="2.500" height="1.300" fill="#3c3f41"/><rect x="9" y="9.500" width="2.500" height="1.300" fill="#3c3f41"/><path d="M1.500 15.500h13" stroke="#afb1b3" stroke-width="1.300"/></svg>
<svg class="ic" style="left:1343.0px;top:720.8px;" width="12.5" height="12.5" viewBox="0 0 16 16"><circle cx="8" cy="8" r="7.500" fill="#e0544c"/><rect x="7" y="3.500" width="2" height="6" fill="#8a2b27"/><rect x="7" y="10.800" width="2" height="2" fill="#8a2b27"/></svg>
<div class="abs" style="left:354px;top:648.500px;width:135.500px;height:47.200px;background:#34432f;border:1px solid #768872;border-radius:4px"></div>
<svg class="ic" style="left:415px;top:695px" width="16" height="9"><path d="M0 0h16L8 8z" fill="#34432f"/><path d="M.5 0L8 7.700 15.500 0" fill="none" stroke="#768872"/></svg>
<span class="t" style="left:366.8px;top:655.8px;line-height:16px;height:16px;color:#cdcdc6;letter-spacing:-0.71px">Success</span>
<span class="t" style="left:366.8px;top:671.9px;line-height:16px;height:16px;color:#cdcdc6;letter-spacing:-0.18px">Operation succeeded</span>
<div class="abs" style="left:25.800px;top:658.800px;width:72.600px;height:72.600px;border-radius:37px;border:4px solid #eef012"></div>
<svg class="ic" style="left:60px;top:694px" width="14" height="22"><path d="M1 1v15l3.800-3.300 2.600 6 2.300-1-2.600-5.900H11.500z" fill="#fff" stroke="#000" stroke-width="1"/></svg>
</body>
</html>
